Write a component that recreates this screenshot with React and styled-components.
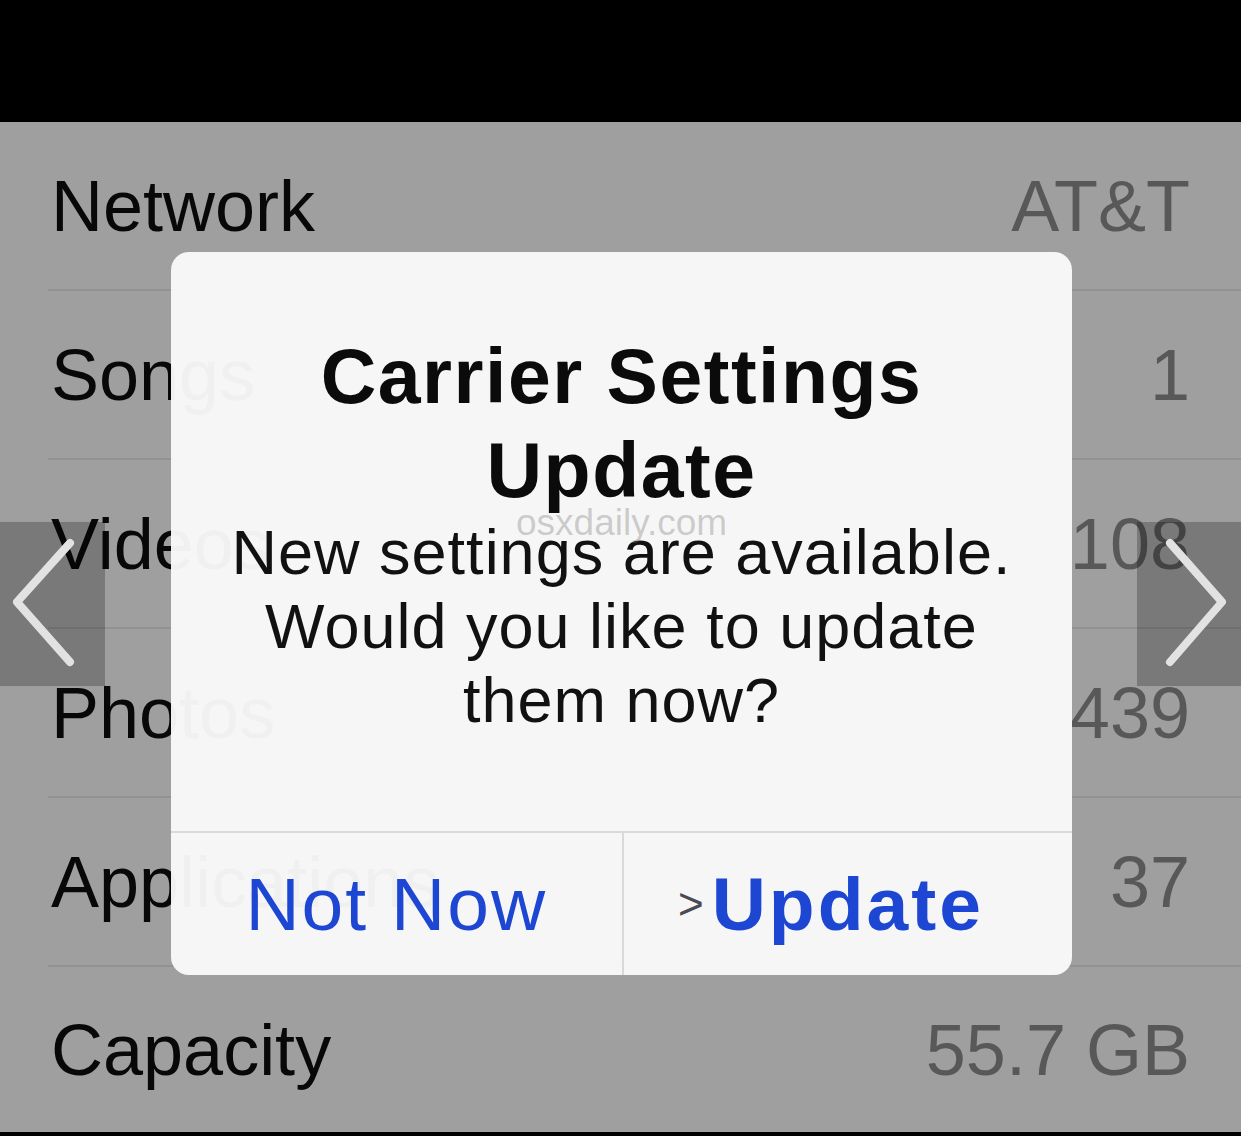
import React from 'react';
import styled, { createGlobalStyle } from 'styled-components';

const GlobalStyle = createGlobalStyle`
    html, body {
        margin: 0;
        padding: 0;
        background: #000;
    }
    body {
        font-family: "Liberation Sans", Arial, sans-serif;
    }
`

const Screen = styled.div`
    position: relative;
    width: 1241px;
    height: 1136px;
    display: flex;
    flex-direction: column;
    background: #000;
    overflow: hidden;
`

const TopBar = styled.div`
    height: 122px;
    flex-shrink: 0;
    background: #000;
`

const List = styled.div`
    height: 1010px;
    display: flex;
    flex-direction: column;
    background: #9f9f9f;
`

const Row = styled.div`
    box-sizing: border-box;
    height: ${p => (p.$last ? 'auto' : '169px')};
    flex: ${p => (p.$last ? 1 : '0 0 auto')};
    margin-left: 48px;
    padding-left: 3px;
    padding-right: 51px;
    display: flex;
    align-items: center;
    justify-content: space-between;
    border-bottom: ${p => (p.$last ? 'none' : '2px solid #929292')};
    font-size: 72px;
    line-height: 1;
`

const Label = styled.span`
    color: #080808;
`

const Value = styled.span`
    color: #585858;
`

const Dialog = styled.div`
    position: absolute;
    left: 171px;
    top: 252px;
    width: 901px;
    height: 723px;
    display: flex;
    flex-direction: column;
    border-radius: 18px;
    background: rgba(249, 249, 249, 0.965);
    overflow: hidden;
`

const DialogBody = styled.div`
    flex: 1;
    padding-top: 77px;
    text-align: center;
`

const Title = styled.div`
    font-size: 77px;
    font-weight: 700;
    letter-spacing: 1.5px;
    line-height: 94px;
    color: #0b0b0b;
`

const Message = styled.div`
    margin-top: -2px;
    font-size: 63px;
    letter-spacing: 1px;
    line-height: 74px;
    color: #111;
`

const Watermark = styled.span`
    position: absolute;
    left: 345px;
    top: 252px;
    font-size: 37px;
    line-height: 37px;
    color: rgba(110, 110, 110, 0.32);
`

const ButtonRow = styled.div`
    height: 144px;
    box-sizing: border-box;
    display: grid;
    grid-template-columns: 1fr 1fr;
    border-top: 2px solid #d9d9d9;
`

const AlertButton = styled.div`
    display: flex;
    align-items: center;
    justify-content: center;
    border-left: ${p => (p.$divider ? '2px solid #d9d9d9' : 'none')};
    font-size: 75px;
    font-weight: ${p => (p.$bold ? 700 : 400)};
    letter-spacing: ${p => (p.$bold ? '3px' : '2px')};
    color: #1d46d3;
`

const ButtonText = styled.span`
    position: relative;
`

const Caret = styled.span`
    position: absolute;
    right: 100%;
    top: 50%;
    margin-right: 8px;
    transform: translateY(-50%);
    font-size: 44px;
    font-weight: 400;
    letter-spacing: 0;
    line-height: 1;
    color: #4a4a55;
`

const NavBox = styled.div`
    position: absolute;
    top: 522px;
    ${p => (p.$side === 'left' ? 'left: 0;' : 'right: 0;')}
    width: ${p => (p.$side === 'left' ? '105px' : '104px')};
    height: 164px;
    background: rgba(0, 0, 0, 0.24);
`

const Chevron = ({ side }) => (
    <svg width="105" height="164" viewBox="0 0 105 164">
        <polyline
            points={side === 'left' ? '70,21 17,80 70,140' : '33,21 85,80 33,140'}
            fill="none"
            stroke="#e2e2e2"
            strokeWidth="8"
            strokeLinecap="round"
            strokeLinejoin="round"
        />
    </svg>
)

const rows = [
    ['Network', 'AT&T'],
    ['Songs', '1'],
    ['Videos', '108'],
    ['Photos', '439'],
    ['Applications', '37'],
    ['Capacity', '55.7 GB'],
]

const App = () => {
    return (
        <Screen>
            <GlobalStyle />
            <TopBar />
            <List>
                {rows.map(([label, value], i) => (
                    <Row key={label} $last={i === rows.length - 1}>
                        <Label>{label}</Label>
                        <Value>{value}</Value>
                    </Row>
                ))}
            </List>

            <Dialog>
                <DialogBody>
                    <Title>Carrier Settings<br />Update</Title>
                    <Message>
                        New settings are available.<br />
                        Would you like to update<br />
                        them now?
                    </Message>
                </DialogBody>
                <Watermark>osxdaily.com</Watermark>
                <ButtonRow>
                    <AlertButton>
                        <ButtonText>Not Now</ButtonText>
                    </AlertButton>
                    <AlertButton $divider $bold>
                        <ButtonText>
                            <Caret>&gt;</Caret>
                            Update
                        </ButtonText>
                    </AlertButton>
                </ButtonRow>
            </Dialog>

            <NavBox $side="left"><Chevron side="left" /></NavBox>
            <NavBox $side="right"><Chevron side="right" /></NavBox>
        </Screen>
    )
}

export default App
